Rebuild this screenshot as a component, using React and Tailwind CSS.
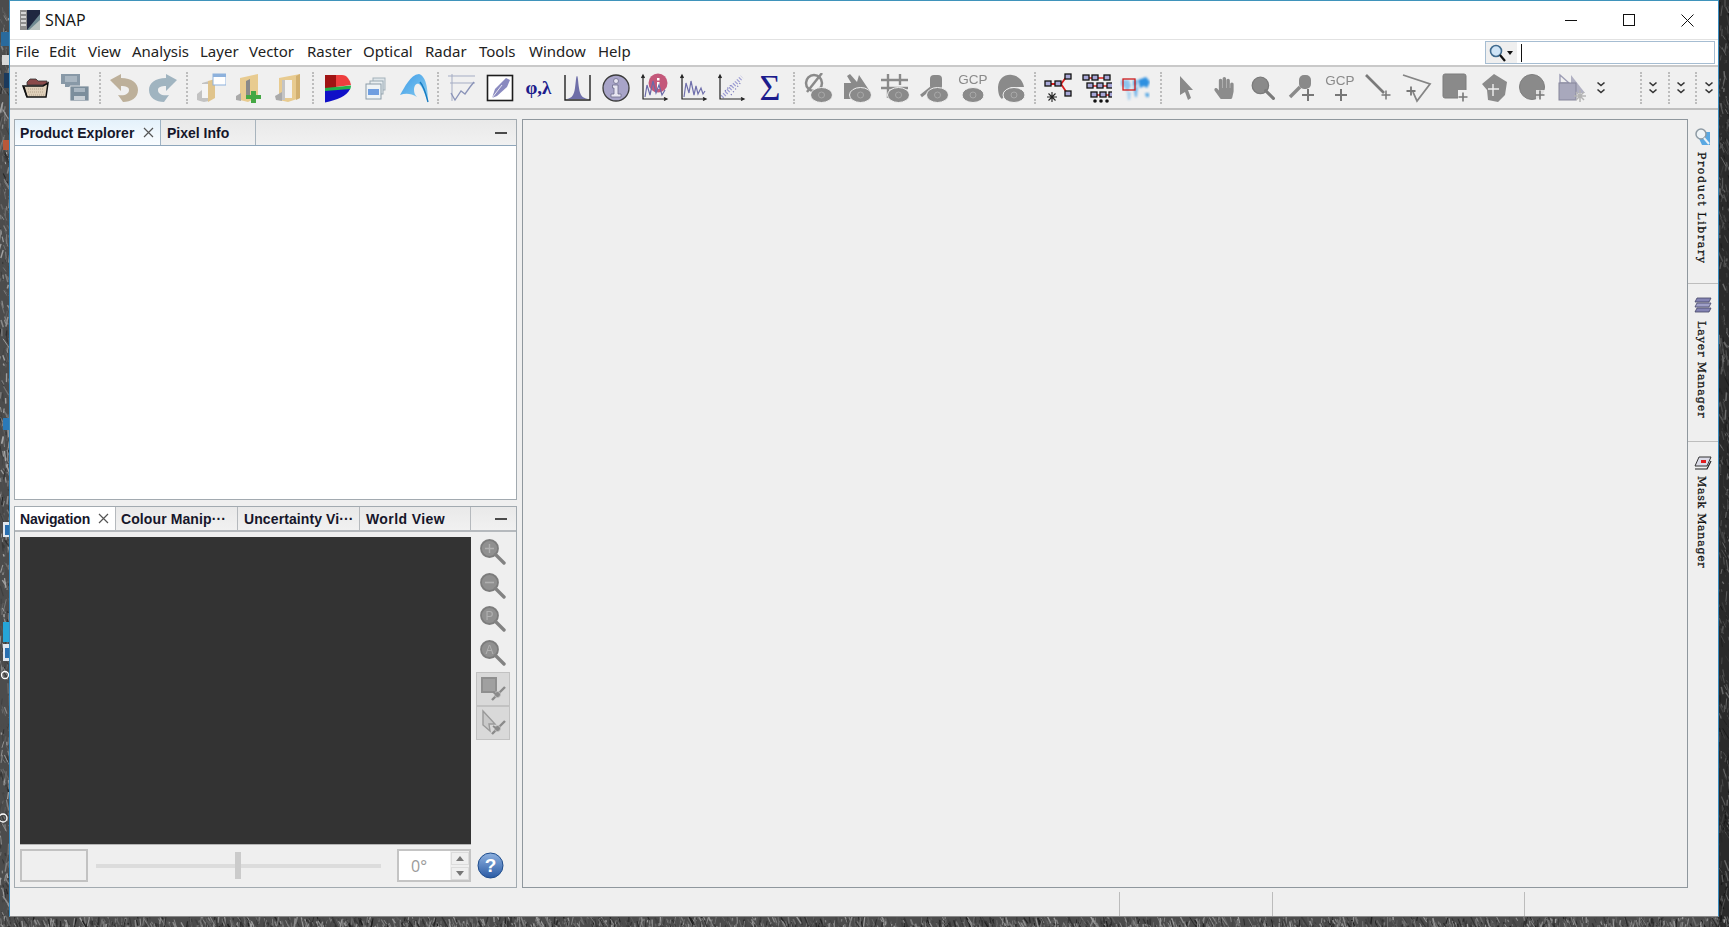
import React from "react";
import { FaHandPaper } from "react-icons/fa";

const G = "#8a8a8a";

function Wallpaper() {
  let s = 12345;
  const r = () => ((s = (s * 16807) % 2147483647) / 2147483647);
  const lines = [];
  const add = (x0, y0, w, h, n, lo, hi) => {
    for (let i = 0; i < n; i++) {
      const x = x0 + r() * w, y = y0 + r() * h, l = 2 + r() * 9;
      const v = Math.floor(lo + r() * hi);
      lines.push(<line key={lines.length} x1={x} y1={y} x2={x + l * (r() - 0.3)} y2={y + l} stroke={`rgb(${v},${v},${v})`} strokeWidth={0.6 + r()} />);
    }
  };
  add(0, 0, 10, 927, 520, 40, 130);
  add(1718, 0, 11, 927, 420, 20, 90);
  add(0, 916, 1729, 11, 2200, 30, 130);
  return (
    <svg className="absolute inset-0" width="1729" height="927">
      <rect width="1729" height="927" fill="#4c4c4c" />
      <rect x="1718" width="11" height="927" fill="#2a2a2a" />
      {lines}
      <rect x="1" y="32" width="8" height="14" fill="#2a6a9c" />
      <rect x="2" y="55" width="8" height="10" fill="#d8d8d8" />
      <rect x="4" y="73" width="6" height="15" fill="#1c3a5c" />
      <rect x="3" y="522" width="7" height="15" fill="#dfe6ee" />
      <rect x="5" y="525" width="5" height="10" fill="#2a6fb0" />
      <rect x="3" y="622" width="7" height="20" fill="#25a5d8" />
      <rect x="3" y="644" width="7" height="17" fill="#dfe6ee" />
      <rect x="5" y="648" width="5" height="10" fill="#2a6fb0" />
      <circle cx="5" cy="675" r="3.5" fill="none" stroke="#fff" strokeWidth="1.3" />
      <circle cx="3" cy="818" r="4" fill="none" stroke="#fff" strokeWidth="1.3" />
      <rect x="3" y="418" width="6" height="12" fill="#2b7ab8" />
      <rect x="3" y="140" width="7" height="10" fill="#b8583a" />
    </svg>
  );
}

function Ic({ children, size = 30 }) {
  return (
    <svg width={size} height={size} viewBox="0 0 30 30" className="blur-[0.35px]">
      {children}
    </svg>
  );
}

const Eye = ({ x = 18.5, y = 22 }) => (
  <g>
    <ellipse cx={x} cy={y} rx="11" ry="7.5" fill={G} stroke="#efefef" strokeWidth="1" />
    <circle cx={x} cy={y} r="3" fill="none" stroke="#a8a8a8" strokeWidth="1" />
  </g>
);
const Plus = ({ x = 22, y = 23, s = 5, w = 2, c = "#777" }) => (
  <path d={`M${x - s} ${y}H${x + s}M${x} ${y - s}V${y + s}`} stroke={c} strokeWidth={w} fill="none" />
);
const Axes = () => (
  <path d="M4 2V26H28M2.5 5L4 2L5.5 5M25 24.5L28 26L25 27.5" stroke="#222" strokeWidth="1.2" fill="none" />
);
const Node = ({ x, y }) => <rect x={x} y={y} width="6" height="5" fill="#a8a8d8" stroke="#111" strokeWidth="1.3" />;

const icons = [
  <Ic key="open">
    <path d="M6 9L9 6H15L17 8H26V12H6Z" fill="#8a4a4a" stroke="#333" strokeWidth="0.8" />
    <path d="M2 13H22L27 10L25 24H6Z" fill="#dfd0ba" stroke="#111" strokeWidth="1.5" />
    <path d="M7 16H22M7 19H23M8 22H23" stroke="#a89880" strokeWidth="0.8" strokeDasharray="1 1" />
    <path d="M6 24L3 14" stroke="#111" strokeWidth="1.5" />
  </Ic>,
  <Ic key="save">
    <path d="M1 1H20V16H17V14H5V11H1Z" fill="#8899a7" />
    <rect x="5" y="3" width="12" height="6" fill="#a9b6c1" />
    <path d="M10 13H29V28H10Z" fill="#7c8e9c" stroke="#eee" strokeWidth="0.8" />
    <rect x="14" y="15" width="11" height="4" fill="#a9b6c1" />
    <rect x="14" y="23" width="11" height="4" fill="#c9d0d6" />
  </Ic>,
  <Ic key="undo">
    <path d="M1 7L12 1V5C23 5 29 10 29 17C29 25 22 29 14 29L9 22C16 23 20 21 20 17C20 14 17 13 12 13V18Z" fill="#bdb09a" />
  </Ic>,
  <Ic key="redo">
    <path d="M29 7L18 1V5C7 5 1 10 1 17C1 25 8 29 16 29L21 22C14 23 10 21 10 17C10 14 13 13 18 13V18Z" fill="#a0b4c0" />
  </Ic>,
  <Ic key="d1">
    <path d="M1 21L6 17V10L13 8V28L8 29L4 28L1 27Z" fill="#c2c2c2" />
    <path d="M12 8L19 6V25L12 29Z" fill="#e0c48c" />
    <rect x="6" y="11" width="6" height="14" fill="#f4f4f4" />
    <rect x="17" y="1" width="13" height="11" fill="#fff" stroke="#8db1dc" strokeWidth="1" />
    <rect x="17" y="1" width="13" height="3" fill="#8db1dc" />
  </Ic>,
  <Ic key="d2">
    <path d="M6 5L24 1V24L14 29L6 27Z" fill="#e8cb90" />
    <path d="M12 8L16 6V22L12 24Z" fill="#8a8a8a" />
    <path d="M2 23L7 20V28L2 27Z" fill="#aaa" />
    <path d="M12 22H17V18H22V22H27V26H22V30H17V26H12Z" fill="#45a845" />
  </Ic>,
  <Ic key="d3">
    <path d="M6 5L27 1V25L15 29L6 27Z" fill="#e8cb90" />
    <rect x="9" y="7" width="10" height="18" fill="#f2f2f2" />
    <path d="M9 7H12V27H9Z" fill="#c4c4c4" />
    <path d="M2 23L9 19V28L3 27Z" fill="#aaa" />
    <path d="M23 3L27 1V25L23 27Z" fill="#d2b070" />
  </Ic>,
  <Ic key="rgb">
    <path d="M3 2H14V15H3Z" fill="#a01414" />
    <path d="M14 2H20C25 2 28 7 29 12L14 14Z" fill="#ee3f3f" />
    <path d="M3 15L29 12.5C29 14 28.5 15.5 28 16.5L3 19Z" fill="#22b24c" />
    <path d="M3 18L28 16C25 23 15 27 3 29.5Z" fill="#1010c8" />
  </Ic>,
  <Ic key="stack">
    <rect x="12" y="5" width="12" height="12" fill="#dfe6ea" stroke="#a3b1ba" />
    <rect x="9" y="8" width="13" height="13" fill="#e8eef1" stroke="#98a8b2" />
    <rect x="5" y="11" width="15" height="15" fill="#eef3f6" stroke="#8b9ca8" />
    <rect x="7" y="16" width="11" height="6" fill="#6f9ee0" />
  </Ic>,
  <Ic key="wave">
    <defs>
      <linearGradient id="wv" x1="0" y1="0" x2="1" y2="1">
        <stop offset="0" stopColor="#3c9be8" />
        <stop offset="1" stopColor="#8ed0f0" />
      </linearGradient>
    </defs>
    <path d="M1 22C6 14 11 2 20 1C27 3 29 16 29 29C26 22 24 14 20 11C17 10 15 13 15 17C15 20 16 22 18 24C12 20 6 20 1 22Z" fill="url(#wv)" />
    <path d="M21 9C25 13 27 21 29 29" stroke="#157ac0" strokeWidth="1.4" fill="none" />
  </Ic>,
  <Ic key="curve">
    <path d="M2 3H29M6 1V28M4 10H29" stroke="#a5adc4" strokeWidth="1" fill="none" />
    <path d="M5 20L9 27L15 18L19 21L24 14L28 9" stroke="#8a93b8" strokeWidth="1.3" fill="none" />
  </Ic>,
  <Ic key="pen">
    <rect x="2.5" y="2.5" width="25" height="25" fill="#fff" stroke="#1d1d1d" strokeWidth="1.6" />
    <path d="M7 25L10 16L21 5L25 7L22 14L12 23Z" fill="#8a8ac0" />
    <path d="M7 25L17 12" stroke="#fff" strokeWidth="0.8" />
  </Ic>,
  <span key="phi" className="font-['Liberation_Serif',serif] font-bold text-[19px] leading-none text-[#1c1c8c]">φ,λ</span>,
  <Ic key="hist">
    <path d="M3 2V27H28V2" stroke="#222" strokeWidth="1.4" fill="none" />
    <path d="M5 26C10 25 12 22 13 15C14 8 14 3 15 3C16 3 16 8 17 15C18 22 20 25 26 26Z" fill="#6e6ea8" />
  </Ic>,
  <Ic key="info">
    <circle cx="15" cy="15" r="13" fill="#a8a4c8" stroke="#3c3c3c" strokeWidth="1.3" />
    <circle cx="15" cy="8" r="2.5" fill="#e8e6f2" stroke="#6c6c8c" strokeWidth="0.8" />
    <path d="M11.5 12H17V21H20V24H10V21H13V15H11.5Z" fill="#e8e6f2" stroke="#6c6c8c" strokeWidth="0.8" />
  </Ic>,
  <Ic key="infoplot">
    <circle cx="19" cy="10" r="9.5" fill="#c4587a" />
    <rect x="18" y="5" width="2.5" height="2.5" fill="#fff" />
    <rect x="18" y="9" width="2.5" height="7" fill="#fff" />
    <path d="M6 24L8 12L11 22L14 8L17 20L20 12L23 22L26 17" stroke="#6a6aa8" strokeWidth="1.2" fill="none" />
    <Axes />
  </Ic>,
  <Ic key="spec">
    <path d="M6 24L8 10L11 20L13 8L16 22L18 13L20 21L23 15L25 21L27 18" stroke="#7070ac" strokeWidth="1.2" fill="none" />
    <Axes />
  </Ic>,
  <Ic key="scat">
    <path d="M6 24L26 4" stroke="#9c9cd4" strokeWidth="4" strokeDasharray="1.2 1.6" fill="none" />
    <path d="M9 18L16 11M15 22L25 9" stroke="#7070b8" strokeWidth="1.3" strokeDasharray="1 2.5" fill="none" />
    <Axes />
  </Ic>,
  <span key="sig" className="font-['Liberation_Serif',serif] text-[36px] leading-none text-[#1c1c8c]">Σ</span>,
  <Ic key="e1">
    <circle cx="11" cy="10" r="8" fill="none" stroke={G} strokeWidth="2.5" />
    <path d="M4 19L19 0" stroke={G} strokeWidth="2.5" />
    <Eye />
  </Ic>,
  <Ic key="e2">
    <path d="M2 10H11V13L5 3L8 1L15 9L17 2L29 20H2Z" fill={G} />
    <path d="M2 10H11V26H2Z" fill={G} />
    <Eye />
  </Ic>,
  <Ic key="e3">
    <path d="M1 7H28M1 15H28M8 1V25M20 1V12" stroke={G} strokeWidth="2.4" fill="none" />
    <Eye />
  </Ic>,
  <Ic key="e4">
    <rect x="11" y="2" width="12" height="15" rx="4" fill={G} />
    <path d="M12 15L2 23" stroke={G} strokeWidth="3" />
    <Eye />
  </Ic>,
  <Ic key="e5">
    <text x="15" y="11" textAnchor="middle" fontFamily="Liberation Sans, sans-serif" fontSize="13.5" fill={G}>GCP</text>
    <Eye x={15} y={22} />
  </Ic>,
  <Ic key="e6">
    <path d="M2 14C3 5 9 1 16 2C23 3 27 8 28 14L15 14L6 26C3 24 2 19 2 14Z" fill={G} />
    <Eye x={18} y={22} />
  </Ic>,
  <Ic key="tree">
    <path d="M6 11H18L24 3M18 11L24 20" stroke="#d81e1e" strokeWidth="1.8" fill="none" />
    <Node x={2} y={8} />
    <Node x={12} y={8} />
    <Node x={22} y={1} />
    <Node x={22} y={18} />
    <path d="M9 19V29M4 24H14M5.5 20.5L12.5 27.5M12.5 20.5L5.5 27.5" stroke="#222" strokeWidth="1.1" />
  </Ic>,
  <Ic key="graph">
    <path d="M3 5H27M7 13H28M11 22H27" stroke="#d81e1e" strokeWidth="1.5" />
    <Node x={1} y={2} />
    <Node x={10} y={2} />
    <Node x={22} y={2} />
    <Node x={5} y={10} />
    <Node x={15} y={10} />
    <Node x={25} y={10} />
    <Node x={9} y={19} />
    <Node x={18} y={19} />
    <Node x={27} y={19} />
    <circle cx="13" cy="28" r="1.8" fill="#111" />
    <circle cx="19" cy="28" r="1.8" fill="#111" />
    <circle cx="25" cy="28" r="1.8" fill="#111" />
  </Ic>,
  <Ic key="map">
    <g className="blur-[1px]">
      <path d="M1 7H9L11 13L7 19L5 15L1 12Z" fill="#8cc4ee" />
      <path d="M7 19H11L10 27H8Z" fill="#a8d2f0" />
      <path d="M13 7H17V13L13 13Z" fill="#58a8e4" />
      <path d="M13 14H18L17 24H15Z" fill="#7ab8ea" />
      <path d="M18 7L26 4L30 9L27 15L24 13L20 15Z" fill="#2e90e0" />
      <path d="M25 20L29 20L29 24L26 24Z" fill="#58a8e4" />
    </g>
    <rect x="3" y="6" width="12" height="11" fill="none" stroke="#d01c1c" strokeWidth="1.3" />
  </Ic>,
  <Ic key="cur">
    <path d="M9 3L22 17H17L20 25L17 27L14 19L9 22Z" fill="#8a8a8a" />
  </Ic>,
  <FaHandPaper key="hand" size={22} color="#8c8c8c" className="blur-[0.35px]" />,
  <Ic key="zm" size={26}>
    <circle cx="12" cy="12" r="9.5" fill={G} stroke="#7a7a7a" strokeWidth="1.4" />
    <path d="M18 18L27 27" stroke="#7a7a7a" strokeWidth="3.6" strokeLinecap="round" />
  </Ic>,
  <Ic key="pin">
    <rect x="12" y="2" width="12" height="14" rx="5" fill={G} />
    <path d="M13 14L3 24" stroke={G} strokeWidth="3.4" />
    <Plus x={21} y={22} s={6} />
  </Ic>,
  <Ic key="gcp">
    <text x="15" y="12" textAnchor="middle" fontFamily="Liberation Sans, sans-serif" fontSize="13.5" fill={G}>GCP</text>
    <Plus x={16} y={22} s={6} />
  </Ic>,
  <Ic key="ln">
    <path d="M2 2L20 20" stroke="#7a7a7a" strokeWidth="2.6" />
    <Plus x={22} y={22} s={4.5} w={1.5} />
  </Ic>,
  <Ic key="poly">
    <path d="M1 2L28 11L15 28L11 19" stroke="#858585" strokeWidth="1.8" fill="none" />
    <Plus x={9} y={18} s={4.5} w={1.8} />
  </Ic>,
  <Ic key="rect">
    <rect x="2" y="1" width="23" height="24" rx="2" fill={G} stroke="#7d7d7d" />
    <rect x="17" y="17" width="12" height="12" fill="#f0f0f0" />
    <Plus x={22} y={24} s={4.5} w={1.6} />
  </Ic>,
  <Ic key="blob">
    <path d="M2 11L14 1L27 9L25 22L18 29L8 27L7 17Z" fill={G} />
    <path d="M13 11V23M8 16H19" stroke="#f0f0f0" strokeWidth="1.4" />
  </Ic>,
  <Ic key="ell">
    <circle cx="14" cy="14" r="12.5" fill={G} stroke="#7d7d7d" />
    <rect x="18" y="17" width="10" height="11" fill="#f0f0f0" fillOpacity="0.85" />
    <Plus x={22} y={22} s={4.5} w={1.6} />
  </Ic>,
  <Ic key="last">
    <path d="M3 2L12 10H3Z" fill="none" stroke="#9c9cb4" strokeWidth="1.4" />
    <path d="M14 2L28 20H14Z" fill="#b0b0c2" />
    <rect x="2" y="10" width="17" height="17" fill="#a8a8bc" stroke="#85859a" />
    <path d="M23 17V29M17 23H29M19 19L27 27M27 19L19 27" stroke="#b4b4b4" strokeWidth="1.5" />
  </Ic>,
];

const Btn = ({ children }) => (
  <div className="w-[38.6px] h-[40px] flex items-center justify-center shrink-0">{children}</div>
);

const Dots = () => (
  <div className="w-[2px] h-[32px] border-l-2 border-dotted border-[#bdbdbd]" />
);

const Chev = () => (
  <svg width="10" height="14" viewBox="0 0 10 14" className="blur-[0.2px]">
    <path d="M1.5 1.5L5 4.5L8.5 1.5M1.5 8.5L5 11.5L8.5 8.5" stroke="#333" strokeWidth="1.6" fill="none" />
  </svg>
);

const groups = [
  { a: 0, b: 2, sep: "" },
  { a: 2, b: 4, sep: "w-[10.8px]" },
  { a: 4, b: 7, sep: "w-[9.3px]" },
  { a: 7, b: 10, sep: "w-[10.7px]" },
  { a: 10, b: 19, sep: "w-[8.2px]" },
  { a: 19, b: 25, sep: "w-[9.7px]" },
  { a: 25, b: 28, sep: "w-[8.4px]" },
  { a: 28, b: 39, sep: "w-[11.8px]" },
];

const Toolbar = () => (
  <div className="h-[41px] bg-[#f0f0f0] flex items-center pl-[5px] border-b-2 border-[#bfbfbf] box-content">
    <Dots />
    {groups.map((g) => (
      <React.Fragment key={g.a}>
        {g.sep && (
          <div className={`${g.sep} flex justify-center shrink-0`}>
            <Dots />
          </div>
        )}
        {icons.slice(g.a, g.b).map((ic, j) => (
          <Btn key={j}>{ic}</Btn>
        ))}
      </React.Fragment>
    ))}
    <div className="w-[20px] flex justify-center shrink-0">
      <Chev />
    </div>
    <div className="ml-auto flex items-center">
      <Dots />
      <div className="w-[25.3px] pl-[6px]"><Chev /></div>
      <Dots />
      <div className="w-[25.3px] pl-[6px]"><Chev /></div>
      <Dots />
      <div className="w-[21px] pl-[6.5px]"><Chev /></div>
    </div>
  </div>
);

const tabFont = "font-['Liberation_Sans',sans-serif] font-bold text-[14px] leading-none text-[#16162a] whitespace-nowrap";

const CloseX = () => (
  <svg width="11" height="11" viewBox="0 0 11 11">
    <path d="M1 1L10 10M10 1L1 10" stroke="#555" strokeWidth="1.2" />
  </svg>
);
const Dash = () => <div className="w-[12px] h-[2px] bg-[#4a4a4a]" />;

const Mag = ({ label }) => (
  <svg width="28" height="28" viewBox="0 0 28 28" className="blur-[0.3px]">
    <circle cx="10.5" cy="10.5" r="8.5" fill="#909090" stroke="#7c7c7c" strokeWidth="1.8" />
    <path d="M16.5 16.5L25 25" stroke="#828282" strokeWidth="3.4" strokeLinecap="round" />
    {label === "+" && <path d="M6 10.5H15M10.5 6V15" stroke="#b0b0b0" strokeWidth="1.4" />}
    {label === "-" && <path d="M6 10.5H15" stroke="#b0b0b0" strokeWidth="1.6" />}
    {label !== "+" && label !== "-" && (
      <text x="10.5" y="15" textAnchor="middle" fontFamily="Liberation Sans, sans-serif" fontSize="12" fill="#b0b0b0">{label}</text>
    )}
  </svg>
);

const SideBtn = ({ children }) => (
  <div className="w-[34px] h-[34px] bg-[#d9d9d9] border border-[#c2c2c2] flex items-center justify-center">
    {children}
  </div>
);

const Lever = () => (
  <g>
    <path d="M13 25L26 12" stroke="#8a8a8a" strokeWidth="2.4" />
    <circle cx="18.5" cy="19.5" r="3" fill="#8a8a8a" stroke="#c8c8c8" strokeWidth="0.8" />
    <path d="M14 17L18 20" stroke="#8a8a8a" strokeWidth="1.8" />
  </g>
);

const VText = ({ children, track }) => (
  <span className={`[writing-mode:vertical-rl] font-['DejaVu_Serif',serif] text-[11px] [-webkit-text-stroke:0.3px_#111] ${track} leading-none text-[#111] whitespace-nowrap`}>
    {children}
  </span>
);

export default function App() {
  return (
    <div className="relative w-[1729px] h-[927px] overflow-hidden bg-[#4c4c4c]">
      <Wallpaper />
      <div className="relative ml-[9px] w-[1710px] h-[917px] border-x border-t border-x-[#3a8cc0] border-t-[#3f93bb] border-b border-b-[#8a8a8a] bg-[#efefef] flex flex-col">
        {/* title bar */}
        <div className="h-[38px] bg-white flex items-center pl-[10px] shrink-0">
          <svg width="20" height="20" viewBox="0 0 20 20">
            <rect width="20" height="20" fill="#1f2740" />
            <path d="M7 20L20 4V20Z" fill="#6f8a92" />
            <path d="M9 20L20 10V20Z" fill="#b9c3c0" />
            <rect width="7" height="20" fill="#8e8e8e" />
            <path d="M1 3H6M1 7H6M1 11H6M1 15H6" stroke="#eee" strokeWidth="1.4" />
          </svg>
          <span className="ml-[5px] -mt-[1px] font-['Open_Sans',sans-serif] text-[16px] text-[#111]">SNAP</span>
          <div className="ml-auto mr-[1px] flex">
            <div className="w-[58px] h-[38px] flex items-center justify-center">
              <div className="w-[12px] h-[1px] bg-[#111]" />
            </div>
            <div className="w-[58px] h-[38px] flex items-center justify-center">
              <div className="w-[12px] h-[12px] border border-[#111]" />
            </div>
            <div className="w-[59px] h-[38px] flex items-center justify-center">
              <svg width="13" height="13" viewBox="0 0 13 13">
                <path d="M0.5 0.5L12.5 12.5M12.5 0.5L0.5 12.5" stroke="#111" strokeWidth="1" />
              </svg>
            </div>
          </div>
        </div>
        {/* menu bar */}
        <div className="h-[28px] bg-white border-t border-[#e2e2e2] border-b-2 border-b-[#c9c9c9] flex items-center pl-[5.5px] pr-[3px] shrink-0 font-['Noto_Sans',sans-serif] text-[15px] leading-[21px] text-[#222]">
          <span className="w-[33.5px] -mt-[2px]">File</span>
          <span className="w-[39px] -mt-[2px]">Edit</span>
          <span className="w-[44px] -mt-[2px]">View</span>
          <span className="w-[68px] -mt-[2px]">Analysis</span>
          <span className="w-[49px] -mt-[2px]">Layer</span>
          <span className="w-[58px] -mt-[2px]">Vector</span>
          <span className="w-[56px] -mt-[2px]">Raster</span>
          <span className="w-[62px] -mt-[2px]">Optical</span>
          <span className="w-[54px] -mt-[2px]">Radar</span>
          <span className="w-[50px] -mt-[2px]">Tools</span>
          <span className="w-[69px] -mt-[2px]">Window</span>
          <span className="-mt-[2px]">Help</span>
          <div className="ml-auto w-[230px] h-[23px] border border-[#a6bdd2] flex">
            <div className="w-[31px] bg-[#efefef] flex items-center pl-[3px] gap-[1px]">
              <svg width="17" height="18" viewBox="0 0 17 18">
                <circle cx="7" cy="7" r="5.5" fill="#cfe4f6" stroke="#3f6a8e" strokeWidth="1.6" />
                <path d="M11 11L16 17" stroke="#111" strokeWidth="2.2" />
              </svg>
              <svg width="6" height="4" viewBox="0 0 6 4">
                <path d="M0 0H6L3 4Z" fill="#111" />
              </svg>
            </div>
            <div className="flex-1 bg-white flex items-center pl-[4px]">
              <div className="w-[1px] h-[18px] bg-[#111]" />
            </div>
          </div>
        </div>
        <Toolbar />
        {/* main */}
        <div className="flex flex-1 pt-[9px] pl-[4px]">
          <div className="w-[503px] h-[769px] flex flex-col gap-[6px] shrink-0">
            {/* upper panel */}
            <div className="h-[381px] border border-[#a2aab0] flex flex-col bg-white">
              <div className="h-[26px] shrink-0 flex bg-gradient-to-b from-[#e9e9e9] to-[#f1f1f1] border-b border-[#8ea6bb]">
                <div className={`w-[146px] pl-[5px] pr-[6px] flex items-center justify-between bg-gradient-to-b from-[#e4f1fb] to-[#fafdff] border-r border-[#9fb3c4] tracking-[0.05px] ${tabFont}`}>
                  Product Explorer
                  <CloseX />
                </div>
                <div className={`w-[95px] pl-[6px] flex items-center border-r border-[#a8b4bd] ${tabFont}`}>Pixel Info</div>
                <div className="flex-1 flex items-center justify-end pr-[9px]">
                  <Dash />
                </div>
              </div>
            </div>
            {/* lower panel */}
            <div className="h-[382px] border border-[#a2aab0] flex flex-col">
              <div className="h-[25px] shrink-0 flex bg-gradient-to-b from-[#e9e9e9] to-[#f1f1f1] border-b-2 border-[#b5b9bd]">
                <div className={`w-[101px] pl-[5px] pr-[6px] flex items-center justify-between bg-white border-r border-[#b5b9bd] tracking-[-0.15px] ${tabFont}`}>
                  Navigation
                  <CloseX />
                </div>
                <div className={`w-[122px] pl-[5px] flex items-center border-r border-[#b5b9bd] tracking-[0.1px] ${tabFont}`}>Colour Manip···</div>
                <div className={`w-[122px] pl-[6px] flex items-center border-r border-[#b5b9bd] tracking-[0.1px] ${tabFont}`}>Uncertainty Vi···</div>
                <div className={`w-[111px] pl-[6px] flex items-center border-r border-[#b5b9bd] tracking-[0.4px] ${tabFont}`}>World View</div>
                <div className="flex-1 flex items-center justify-end pr-[9px]">
                  <Dash />
                </div>
              </div>
              <div className="pl-[5px] pt-[5px] flex flex-col">
                <div className="flex h-[308px]">
                  <div className="w-[451px] h-[308px] bg-[#333333] border-b border-[#b5b5b5]" />
                  <div className="ml-[5px] w-[34px] -mt-[1.5px] flex flex-col items-center">
                    <div className="h-[33.5px] flex items-center"><Mag label="+" /></div>
                    <div className="h-[33.5px] flex items-center"><Mag label="-" /></div>
                    <div className="h-[33.5px] flex items-center"><Mag label="P" /></div>
                    <div className="h-[33.5px] flex items-center"><Mag label="A" /></div>
                    <div className="mt-[2.5px]">
                      <SideBtn>
                        <svg width="28" height="28" viewBox="0 0 28 28">
                          <rect x="3" y="3" width="14" height="14" fill="#a0a0a0" stroke="#8f8f8f" strokeWidth="2" />
                          <Lever />
                        </svg>
                      </SideBtn>
                    </div>
                    <SideBtn>
                      <svg width="28" height="28" viewBox="0 0 28 28">
                        <path d="M4 2L16 15L10 15L11 22L4 16Z" fill="#c9c9c9" stroke="#9a9a9a" strokeWidth="1.4" />
                        <Lever />
                      </svg>
                    </SideBtn>
                  </div>
                </div>
                <div className="mt-[4px] flex items-center h-[33px]">
                  <div className="w-[68px] h-[33px] border-2 border-[#c2c2c2]" />
                  <div className="relative ml-[8px] w-[285px] h-[4px] bg-[#dcdcdc]">
                    <div className="absolute left-[139px] -top-[12px] w-[6px] h-[27px] bg-[#cbcbcb]" />
                  </div>
                  <div className="ml-[16px] w-[74px] h-[33px] border-2 border-[#c4c4c4] flex">
                    <div className="w-[51px] bg-white pl-[12px] flex items-center font-['Open_Sans',sans-serif] text-[16px] text-[#9a9a9a]">0°</div>
                    <div className="flex-1 flex flex-col items-center justify-center gap-[2px]">
                      <div className="w-[18px] h-[13px] border border-[#dcdcdc] flex items-center justify-center">
                        <svg width="8" height="5" viewBox="0 0 8 5"><path d="M4 0L8 5H0Z" fill="#777" /></svg>
                      </div>
                      <div className="w-[18px] h-[13px] border border-[#dcdcdc] flex items-center justify-center">
                        <svg width="8" height="5" viewBox="0 0 8 5"><path d="M0 0H8L4 5Z" fill="#777" /></svg>
                      </div>
                    </div>
                  </div>
                  <svg width="27" height="27" viewBox="0 0 27 27" className="ml-[6px]">
                    <defs>
                      <linearGradient id="hlp" x1="0" y1="0" x2="0" y2="1">
                        <stop offset="0" stopColor="#8fb2e0" />
                        <stop offset="1" stopColor="#2a5aa4" />
                      </linearGradient>
                    </defs>
                    <circle cx="13.5" cy="13.5" r="12.5" fill="url(#hlp)" stroke="#1d4c8c" strokeWidth="1" />
                    <text x="13.5" y="20" textAnchor="middle" fontFamily="Liberation Sans, sans-serif" fontWeight="bold" fontSize="19" fill="#fff">?</text>
                  </svg>
                </div>
              </div>
            </div>
          </div>
          {/* editor */}
          <div className="ml-[5px] w-[1166px] h-[769px] border border-[#8f979d] bg-[#efefef] shrink-0" />
          {/* right bar */}
          <div className="flex-1 flex flex-col items-center">
            <div className="h-[165px] w-full flex flex-col items-center pt-[9px] pr-[1px] border-b border-[#bdbdbd]">
              <svg width="18" height="18" viewBox="0 0 18 18" className="blur-[0.3px]">
                <path d="M2 4H16V17H8Z" fill="#5aa8e2" />
                <circle cx="7" cy="6" r="5" fill="#eef3f6" stroke="#8d9aa3" strokeWidth="1.5" />
                <path d="M10 10L15 16" stroke="#eaf2f8" strokeWidth="2" />
              </svg>
              <div className="mt-[6px] pr-[3px]"><VText track="tracking-[1.6px]">Product Library</VText></div>
            </div>
            <div className="h-[158px] w-full flex flex-col items-center pt-[13px] pr-[1px] border-b border-[#bdbdbd]">
              <svg width="18" height="16" viewBox="0 0 18 16">
                <path d="M3 1H17L15 5H1Z" fill="#8484b4" stroke="#444466" strokeWidth="0.8" />
                <path d="M3 6H17L15 10H1Z" fill="#a0a0c8" stroke="#444466" strokeWidth="0.8" />
                <path d="M3 11H17L15 15H1Z" fill="#8484b4" stroke="#444466" strokeWidth="0.8" />
              </svg>
              <div className="mt-[8px] pr-[3px]"><VText track="tracking-[0.9px]">Layer Manager</VText></div>
            </div>
            <div className="w-full flex flex-col items-center pt-[14px] pr-[1px]">
              <svg width="18" height="14" viewBox="0 0 18 14">
                <path d="M5 1H17L13 10H1Z" fill="#dcdce8" stroke="#333" strokeWidth="1" />
                <rect x="7" y="4" width="5" height="3" fill="#e01c1c" />
                <path d="M1 13H13L17 5" stroke="#222" strokeWidth="1.2" fill="none" />
              </svg>
              <div className="mt-[6px] pr-[3px]"><VText track="tracking-[0.7px]">Mask Manager</VText></div>
            </div>
          </div>
        </div>
        {/* status bar */}
        <div className="h-[28px] shrink-0 flex items-end">
          <div className="w-[1110px] h-[24px] border-r border-[#bcbcbc]" />
          <div className="w-[153px] h-[24px] border-r border-[#bcbcbc]" />
          <div className="w-[252px] h-[24px] border-r border-[#bcbcbc]" />
        </div>
      </div>
    </div>
  );
}
